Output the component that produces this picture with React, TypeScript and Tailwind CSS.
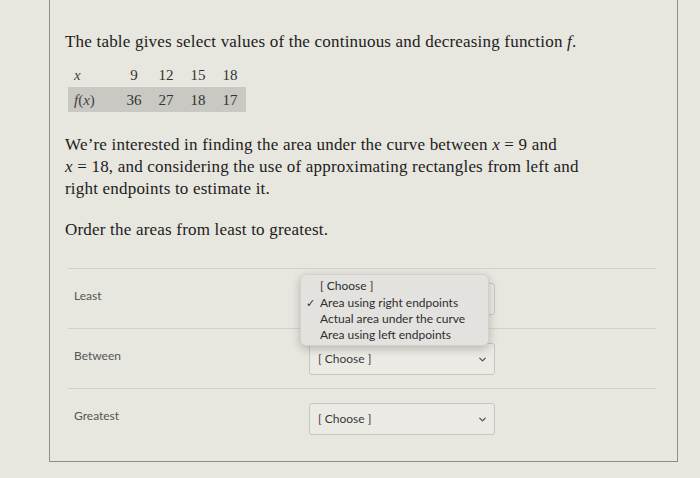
import React from 'react';
import { ChevronDown } from 'lucide-react';

const serif = "font-['Liberation_Serif','Times_New_Roman',serif]";
const sans = "font-['Lato','Open_Sans',sans-serif]";

const xs = ['9', '12', '15', '18'];
const fx = ['36', '27', '18', '17'];

const OPTIONS = [
  { label: '[ Choose ]', checked: false },
  { label: 'Area using right endpoints', checked: true },
  { label: 'Actual area under the curve', checked: false },
  { label: 'Area using left endpoints', checked: false },
];

const Var: React.FC<{ children: React.ReactNode }> = ({ children }) => (
  <span className="italic">{children}</span>
);

const Select: React.FC<{ open?: boolean }> = ({ open }) => (
  <div className="relative w-[186px] h-[32px]">
    <div className={`flex items-center justify-between h-full pl-[8px] pr-[6px] bg-[#eceae4] border border-[#c9c7c1] rounded-[3px] ${sans} text-[12px] text-[#3a3a3a]`}>
      <span className={open ? 'invisible' : ''}>[ Choose ]</span>
      <ChevronDown size={11} strokeWidth={3} className="text-[#555]" />
    </div>
    {open && (
      <div className={`absolute left-[-9px] top-[-9px] w-[189px] h-[72px] pt-[3px] rounded-[6px] bg-[#e3e2df] border border-[#d2d1cd] shadow-[0_3px_10px_rgba(0,0,0,0.22)] ${sans} text-[12px] leading-[16px] text-[#2e2e2e]`}>
        {OPTIONS.map(o => (
          <div key={o.label} className="flex items-center h-[16.4px]">
            <span className="w-[19px] pl-[5px] text-[11px]">{o.checked ? '✓' : ''}</span>
            <span>{o.label}</span>
          </div>
        ))}
      </div>
    )}
  </div>
);

const Row: React.FC<{ label: string; open?: boolean; last?: boolean }> = ({ label, open, last }) => (
  <div className={`flex border-t border-[#d3d1ca] pt-[14px] ${last ? 'pb-[26px]' : 'pb-[13px]'} ${open ? 'relative z-10' : ''}`}>
    <div className={`w-[241px] pl-[6px] pt-[5px] ${sans} text-[12px] leading-[16px] text-[#555]`}>{label}</div>
    <Select open={open} />
  </div>
);

export default function App() {
  return (
    <div className="w-[700px] h-[478px] bg-[#e7e6df] overflow-hidden">
      <div className="ml-[49px] w-[629px] border-l border-r border-b border-[#8f8e8a] pt-[31px]">
        <div className={`pl-[15px] pr-[10px] ${serif} text-[17px] tracking-[0.2px] leading-[22px] text-[#1c1c1c]`}>
          <p>
            The table gives select values of the continuous and decreasing function <Var>f</Var>.
          </p>

          <table className="mt-[10px] ml-[3px] text-[15px] tracking-normal border-collapse">
            <tbody>
              <tr className="h-[24px]">
                <td className="w-[50px] pl-[6px] text-[#444]"><Var>x</Var></td>
                {xs.map(v => (
                  <td key={v} className="w-[32px] text-center text-[#333]">{v}</td>
                ))}
              </tr>
              <tr className="h-[25px] bg-[#c9c8c2]">
                <td className="pl-[6px] text-[#444]"><Var>f</Var>(<Var>x</Var>)</td>
                {fx.map((v, i) => (
                  <td key={i} className="text-center text-[#333]">{v}</td>
                ))}
              </tr>
            </tbody>
          </table>

          <p className="mt-[22px]">
            We’re interested in finding the area under the curve between <Var>x</Var> = 9 and
            <br />
            <Var>x</Var> = 18, and considering the use of approximating rectangles from left and
            <br />
            right endpoints to estimate it.
          </p>

          <p className="mt-[19px]">Order the areas from least to greatest.</p>
        </div>

        <div className="mt-[27px] ml-[18px] mr-[21px]">
          <Row label="Least" open />
          <Row label="Between" />
          <Row label="Greatest" last />
        </div>
      </div>
    </div>
  );
}
